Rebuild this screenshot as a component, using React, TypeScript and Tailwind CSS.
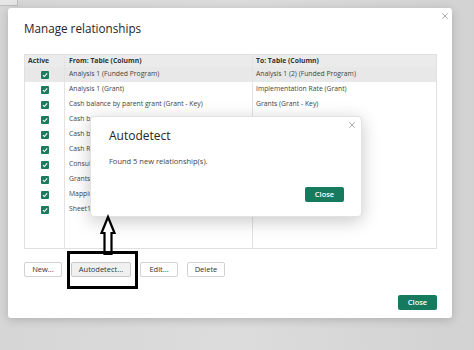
import { X } from "lucide-react";

const rows = [
  ["Analysis 1 (Funded Program)", "Analysis 1 (2) (Funded Program)"],
  ["Analysis 1 (Grant)", "Implementation Rate (Grant)"],
  ["Cash balance by parent grant (Grant - Key)", "Grants (Grant - Key)"],
  ["Cash balance by parent grant (Funded Program)", "Implementation Rate (Grant)"],
  ["Cash balance by parent grant (Grant)", "Grants (Grant)"],
  ["Cash Receipts (Grant)", "Grants (Grant)"],
  ["Consultants (Grant)", "Grants (Grant)"],
  ["Grants (Funded Program)", "Analysis 1 (Funded Program)"],
  ["Mapping (Grant)", "Grants (Grant)"],
  ["Sheet1 (Grant)", "Grants (Grant)"],
];

function Check() {
  return (
    <div className="w-[8px] h-[8px] rounded-[1px] bg-[#1d7a5c] flex items-center justify-center">
      <svg width="6" height="6" viewBox="0 0 10 10">
        <path d="M1.5 5.2 L4 7.6 L8.6 2.4" stroke="white" strokeWidth="1.8" fill="none" />
      </svg>
    </div>
  );
}

function Btn({ label, active }: { label: string; active?: boolean }) {
  return (
    <div
      className={
        active
          ? "w-[60px] h-[15px] flex items-center justify-center rounded-[2px] border border-[#c8c8c8] bg-[#f0f0f0] text-[7.5px] text-[#333]"
          : "w-[38px] h-[15px] flex items-center justify-center rounded-[2px] border border-[#d2d2d2] bg-white text-[7.5px] text-[#333]"
      }
    >
      {label}
    </div>
  );
}

export default function App() {
  return (
    <div
      className="relative w-[474px] h-[350px] overflow-hidden bg-gradient-to-r from-[#d6d6d6] via-[#dcdcdc] to-[#d2d2d2] pt-[8px] pl-[8px]"
      style={{ fontFamily: '"Open Sans", "Noto Sans", sans-serif' }}
    >
      <div className="absolute left-0 top-0 w-[18px] h-[6px] bg-[#e6e6e6] border-r border-b border-[#bdbdbd]" />

      {/* main dialog */}
      <div className="relative w-[444px] h-[310px] bg-white rounded-[3px] shadow-[0_2px_10px_rgba(0,0,0,0.18)] flex flex-col pl-[16px] pr-[15px] pt-[12px] pb-[8px]">
        <X className="absolute right-[2px] top-[3px] text-[#777]" size={10} strokeWidth={1.5} />
        <div className="text-[11.7px] text-[#252525] leading-[16px]">Manage relationships</div>

        <div className="mt-[18px] h-[195px] border border-[#e0e0e0] flex text-[6.8px] text-[#444]">
          <div className="w-[39px] flex flex-col">
            <div className="h-[12px] bg-[#ebebeb] font-bold pl-[3px] flex items-center text-[#333]">Active</div>
            {rows.map((r, i) => (
              <div key={i} className={(i === 0 ? "bg-[#e8e8e8] " : "") + "h-[15px] flex items-center justify-center"}>
                <Check />
              </div>
            ))}
          </div>
          <div className="w-[188px] flex flex-col border-l border-[#e3e3e3]">
            <div className="h-[12px] bg-[#ebebeb] font-bold pl-[4px] flex items-center text-[#333]">From: Table (Column)</div>
            {rows.map((r, i) => (
              <div key={i} className={(i === 0 ? "bg-[#e8e8e8] " : "") + "h-[15px] flex items-center pl-[4px] whitespace-nowrap"}>
                {r[0]}
              </div>
            ))}
          </div>
          <div className="flex-1 flex flex-col border-l border-[#e3e3e3]">
            <div className="h-[12px] bg-[#ebebeb] font-bold pl-[3px] flex items-center text-[#333]">To: Table (Column)</div>
            {rows.map((r, i) => (
              <div key={i} className={(i === 0 ? "bg-[#e8e8e8] " : "") + "h-[15px] flex items-center pl-[3px] whitespace-nowrap"}>
                {r[1]}
              </div>
            ))}
          </div>
        </div>

        <div className="mt-[13px] flex gap-[9px]">
          <Btn label="New..." />
          <Btn label="Autodetect..." active />
          <Btn label="Edit..." />
          <Btn label="Delete" />
        </div>

        <div className="mt-auto flex justify-end">
          <div className="w-[39px] h-[15px] rounded-[2px] bg-[#157a5e] text-white text-[7.5px] font-semibold flex items-center justify-center">
            Close
          </div>
        </div>
      </div>

      {/* autodetect dialog */}
      <div className="absolute left-[90px] top-[116px] w-[272px] h-[101px] bg-white rounded-[4px] border border-[#e2e2e2] shadow-[0_4px_18px_rgba(0,0,0,0.22)] flex flex-col pl-[18px] pr-[17px] pt-[11px] pb-[14px]">
        <X className="absolute right-[4px] top-[3px] text-[#777]" size={10} strokeWidth={1.5} />
        <div className="text-[12px] leading-[16px] text-[#252525]">Autodetect</div>
        <div className="mt-[12px] text-[7.5px] text-[#444]">Found 5 new relationship(s).</div>
        <div className="mt-auto flex justify-end">
          <div className="w-[39px] h-[15px] rounded-[2px] bg-[#157a5e] text-white text-[7.5px] font-semibold flex items-center justify-center">
            Close
          </div>
        </div>
      </div>

      {/* annotation */}
      <svg className="absolute left-[96px] top-[214px]" width="24" height="42" viewBox="0 0 24 42">
        <path d="M12 3 L18.5 19 L15.5 19 L15.5 40 L8.5 40 L8.5 19 L5.5 19 Z" fill="white" stroke="black" strokeWidth="2.2" strokeLinejoin="miter" />
      </svg>
      <div className="absolute left-[67px] top-[251px] w-[71px] h-[38px] border-[3px] border-black" />
    </div>
  );
}
